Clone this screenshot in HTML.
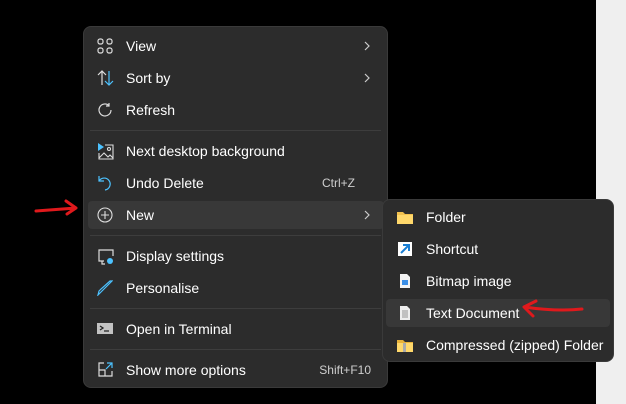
<!DOCTYPE html>
<html><head><style>
*{margin:0;padding:0;box-sizing:border-box}
body{width:626px;height:404px;background:#000;position:relative;overflow:hidden;font-family:"Segoe UI","Liberation Sans",sans-serif;font-size:14px;color:#fff}
.white{position:absolute;left:596px;top:0;width:30px;height:404px;background:#efefef}
.menu{position:absolute;left:83px;top:26px;width:305px;height:362px;background:#2c2c2c;border:1px solid #3a3a3a;border-radius:8px}
.sub{position:absolute;left:382px;top:199px;width:232px;height:163px;background:#2c2c2c;border:1px solid #3a3a3a;border-radius:8px}
.it{position:absolute;left:0;right:0;height:20px;line-height:20px}
.it .t{position:absolute;left:42px}
.sub .it .t{position:absolute;left:43px}
.it .k{position:absolute;right:32px;font-size:12px;color:#cfcfcf}
.it .a{position:absolute;right:16px;top:0;color:#cfcfcf}
.it svg.i{position:absolute;left:13px;top:2px}
.sub .it svg.i{position:absolute;left:14px;top:2px}
.sep{position:absolute;left:6px;right:6px;height:1px;background:#3d3d3d}
.hov{position:absolute;background:#383838;border-radius:4px}
</style></head><body>
<div class="white"></div>
<div class="menu">
<div class="hov" style="left:4px;top:174px;width:296px;height:28px"></div>
<div class="it" style="top:9px"><svg class="i" width="16" height="16" fill="none" stroke="#ddd" stroke-width="1.2"><rect x="1" y="1" width="5" height="5" rx="2"/><rect x="10" y="1" width="5" height="5" rx="2"/><rect x="1" y="10" width="5" height="5" rx="2"/><rect x="10" y="10" width="5" height="5" rx="2"/></svg><span class="t">View</span><svg class="a" style="top:5px" width="8" height="10" fill="none" stroke="#ccc" stroke-width="1.2"><path d="M2 1l4 4-4 4"/></svg></div>
<div class="it" style="top:41px"><svg class="i" width="18" height="16" fill="none" stroke-width="1.2"><path d="M5 15V1M1 5l4-4 4 4" stroke="#ddd"/><path d="M12 1v14M8 11l4 4 4-4" stroke="#4cc2ff"/></svg><span class="t">Sort by</span><svg class="a" style="top:5px" width="8" height="10" fill="none" stroke="#ccc" stroke-width="1.2"><path d="M2 1l4 4-4 4"/></svg></div>
<div class="it" style="top:73px"><svg class="i" width="16" height="16" fill="none" stroke="#ddd" stroke-width="1.2"><path d="M14 8A6 6 0 1 1 12 3.5M12 1v3h-3"/></svg><span class="t">Refresh</span></div>
<div class="sep" style="top:103px"></div>
<div class="it" style="top:114px"><svg class="i" width="18" height="18" fill="none" stroke-width="1.1"><path d="M1 0v8l6-4z" fill="#4cc2ff"/><path d="M8 2h8v14H2V10" stroke="#ddd"/><circle cx="12" cy="6" r="1.5" stroke="#ddd"/><path d="M2 15l5-5 4 4 2-2 3 3" stroke="#ddd"/></svg><span class="t">Next desktop background</span></div>
<div class="it" style="top:146px"><svg class="i" width="16" height="16" fill="none" stroke="#4cc2ff" stroke-width="1.2"><path d="M2 1v5h5M2 6a6 6 0 1 1 6 9"/></svg><span class="t">Undo Delete</span><span class="k">Ctrl+Z</span></div>
<div class="it" style="top:178px"><svg class="i" width="16" height="16" fill="none" stroke="#ddd" stroke-width="1.1"><circle cx="8" cy="8" r="7"/><path d="M8 4v8M4 8h8"/></svg><span class="t">New</span><svg class="a" style="top:5px" width="8" height="10" fill="none" stroke="#ccc" stroke-width="1.2"><path d="M2 1l4 4-4 4"/></svg></div>
<div class="sep" style="top:208px"></div>
<div class="it" style="top:219px"><svg class="i" width="18" height="18" fill="none" stroke-width="1.2"><path d="M7 13H2V2h14v6M5 13v3h3" stroke="#ddd"/><circle cx="13" cy="13" r="3" fill="#4cc2ff"/></svg><span class="t">Display settings</span></div>
<div class="it" style="top:251px"><svg class="i" width="16" height="16" fill="none" stroke="#4cc2ff" stroke-width="1.2"><path d="M15 1L6 10l-2 2-3 3 1-4 2-2 9-8z"/></svg><span class="t">Personalise</span></div>
<div class="sep" style="top:281px"></div>
<div class="it" style="top:292px"><svg class="i" width="17" height="16"><rect x="0" y="2" width="16" height="11" fill="#ddd" opacity=".85"/><path d="M3 5l3 2-3 2M7 10h5" stroke="#222" stroke-width="1.3" fill="none"/></svg><span class="t">Open in Terminal</span></div>
<div class="sep" style="top:322px"></div>
<div class="it" style="top:333px"><svg class="i" width="16" height="16" fill="none" stroke-width="1.2"><path d="M7 1H2v13h13V9" stroke="#ddd"/><path d="M2 8h6v6" stroke="#ddd"/><path d="M9 7l6-6M10 1h5v5" stroke="#4cc2ff"/></svg><span class="t">Show more options</span><span class="k" style="right:16px">Shift+F10</span></div>
</div>
<div class="sub">
<div class="hov" style="left:3px;top:99px;width:224px;height:28px"></div>
<div class="it" style="top:7px"><svg class="i" width="16" height="16"><path d="M0 3h6l2 2h8v10H0z" fill="#f2c14e"/><path d="M0 6h16v9H0z" fill="#ffd86b"/></svg><span class="t">Folder</span></div>
<div class="it" style="top:39px"><svg class="i" width="16" height="16"><rect x="1" y="1" width="14" height="14" fill="#fff"/><path d="M4 12l7-7M6 4h6v6" stroke="#1a7fd4" stroke-width="2" fill="none"/></svg><span class="t">Shortcut</span></div>
<div class="it" style="top:71px"><svg class="i" width="16" height="16"><path d="M3 1h7l3 3v11H3z" fill="#f2f2f2"/><rect x="5" y="7" width="6" height="5" fill="#3a8ee6"/></svg><span class="t">Bitmap image</span></div>
<div class="it" style="top:103px"><svg class="i" width="16" height="16"><path d="M3 1h7l3 3v11H3z" fill="#eee"/><path d="M5 6h6M5 8h6M5 10h6M5 12h6" stroke="#777" stroke-width=".8"/></svg><span class="t">Text Document</span></div>
<div class="it" style="top:135px"><svg class="i" width="16" height="16"><path d="M0 3h6l2 2h8v10H0z" fill="#e8b23a"/><path d="M0 6h16v9H0z" fill="#ffd86b"/><rect x="6" y="6" width="3" height="9" fill="#aaa"/></svg><span class="t">Compressed (zipped) Folder</span></div>
</div>
<svg style="position:absolute;left:0;top:0" width="626" height="404" fill="none" stroke="#e0191c" stroke-width="3" stroke-linecap="round" stroke-linejoin="round">
<path d="M36 211C50 210 62 209 76 208M66 201l10 7-9 6"/>
<path d="M582 309C565 311 545 310 524 307M536 301l-12 6 9 9"/>
</svg>
</body></html>
